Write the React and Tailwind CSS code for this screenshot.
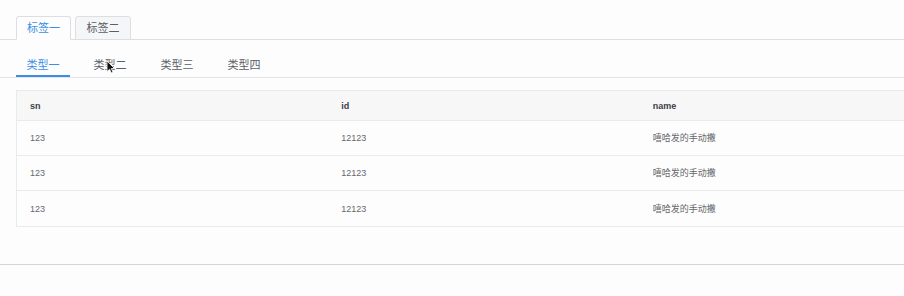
const cardTabs = ['标签一', '标签二']
const lineTabs = ['类型一', '类型二', '类型三', '类型四']
const rows = [
  { sn: '123', id: '12123', name: '嘻哈发的手动撒' },
  { sn: '123', id: '12123', name: '嘻哈发的手动撒' },
  { sn: '123', id: '12123', name: '嘻哈发的手动撒' },
]

function Cursor() {
  return (
    <svg className="absolute left-[106px] top-[60px] w-[9px] h-[14px]" viewBox="0 0 9 14">
      <path d="M1 1 L1 11.5 L3.6 9.2 L5.4 13 L7 12.2 L5.3 8.6 L8.4 8.4 Z" fill="#111" stroke="#fff" strokeWidth="0.8" strokeLinejoin="round" />
    </svg>
  )
}

export default function App() {
  return (
    <div className="relative w-[904px] h-[296px] overflow-hidden bg-[#fdfdfd] font-['Liberation_Sans','Noto_Sans_CJK_SC',sans-serif]">
      {/* card tabs */}
      <div className="flex items-end gap-1 pl-4 pt-4 border-b border-[#dcdee2]">
        {cardTabs.map((t, i) => (
          <div
            key={t}
            className={`-mb-px h-[24px] pt-px flex items-center justify-center rounded-t-[3px] border border-[#dcdee2] text-[11px] ${
              i === 0 ? 'w-[55px] bg-[#fdfdfd] border-b-[#fdfdfd] text-[#3a8ee6]' : 'w-[56px] bg-[#f5f6f7] text-[#5a5e66]'
            }`}
          >
            {t}
          </div>
        ))}
      </div>

      {/* line tabs */}
      <div className="flex gap-[13px] pl-4 pt-[13px] border-b border-[#e3e5e8]">
        {lineTabs.map((t, i) => (
          <div
            key={t}
            className={`relative w-[54px] h-[24px] pt-px flex items-center justify-center text-[11px] ${
              i === 0 ? 'text-[#3a8ee6]' : 'text-[#5a5e66]'
            }`}
          >
            {t}
            {i === 0 && <span className="absolute left-0 right-0 bottom-0 h-[2px] bg-[#3a8ee6]" />}
          </div>
        ))}
      </div>

      {/* table */}
      <div className="mt-3 ml-4 w-[936px] border border-[#e8eaec] text-[9px]">
        <div className="grid grid-cols-3 h-[30px] pt-[2px] items-center bg-[#f7f7f8] border-b border-[#e8eaec] text-[#3c4048] font-bold">
          <div className="pl-[13px]">sn</div>
          <div className="pl-[13px]">id</div>
          <div className="pl-[13px]">name</div>
        </div>
        {rows.map((r, i) => (
          <div
            key={i}
            className={`grid grid-cols-3 h-[35px] pt-[2px] items-center text-[#66686c] ${i < rows.length - 1 ? 'border-b border-[#e8eaec]' : ''}`}
          >
            <div className="pl-[13px]">{r.sn}</div>
            <div className="pl-[13px]">{r.id}</div>
            <div className="pl-[13px]">{r.name}</div>
          </div>
        ))}
      </div>

      <div className="mt-[37px] border-t border-[#d6d6d6]" />

      <Cursor />
    </div>
  )
}
